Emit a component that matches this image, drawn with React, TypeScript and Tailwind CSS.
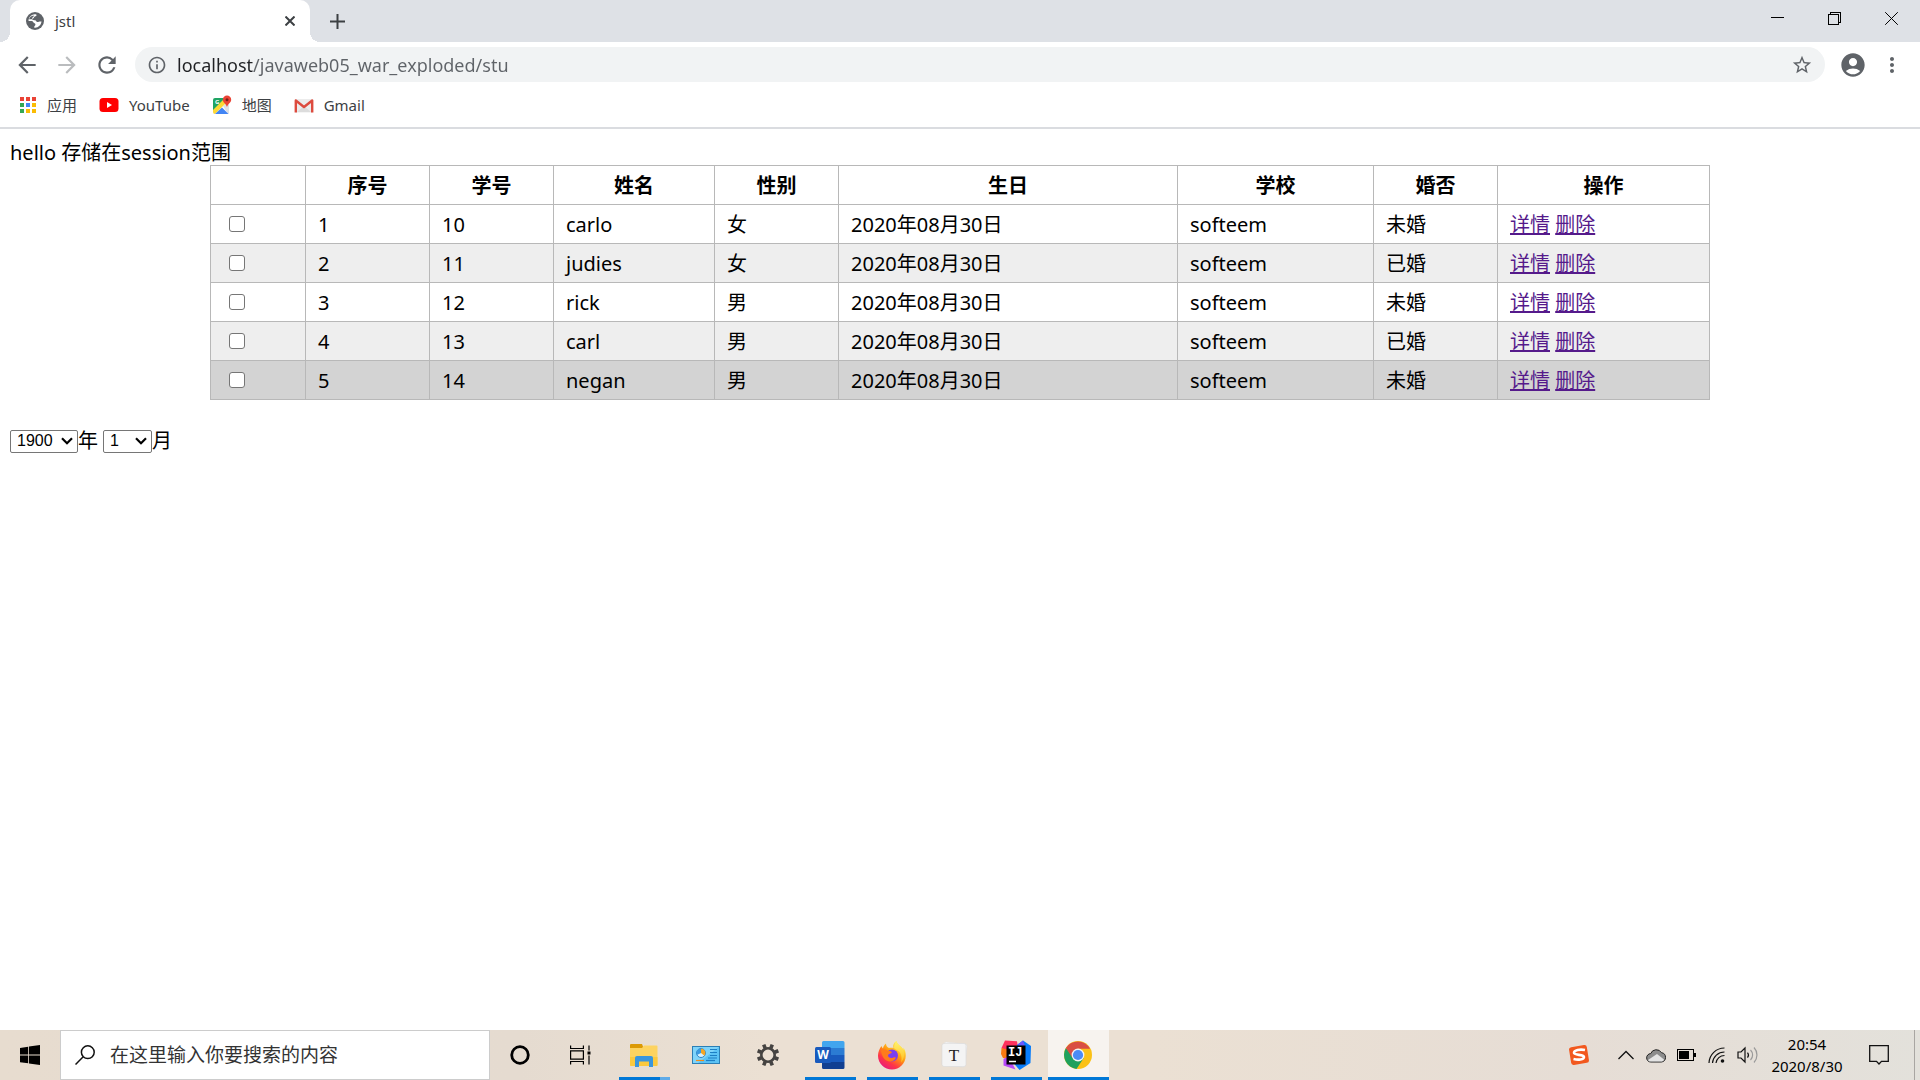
import type { ReactNode } from "react";
import {
  MdAccountCircle,
  MdArrowBack,
  MdArrowForward,
  MdInfoOutline,
  MdMoreVert,
  MdRefresh,
  MdStarBorder,
} from "react-icons/md";

type Student = {
  id: number;
  no: number;
  name: string;
  sex: string;
  birth: string;
  school: string;
  married: boolean;
};

const students: Student[] = [
  { id: 1, no: 10, name: "carlo", sex: "女", birth: "2020年08月30日", school: "softeem", married: false },
  { id: 2, no: 11, name: "judies", sex: "女", birth: "2020年08月30日", school: "softeem", married: true },
  { id: 3, no: 12, name: "rick", sex: "男", birth: "2020年08月30日", school: "softeem", married: false },
  { id: 4, no: 13, name: "carl", sex: "男", birth: "2020年08月30日", school: "softeem", married: true },
  { id: 5, no: 14, name: "negan", sex: "男", birth: "2020年08月30日", school: "softeem", married: false },
];

const columns = [
  { title: "", width: "w-[95px]" },
  { title: "序号", width: "w-[124px]" },
  { title: "学号", width: "w-[124px]" },
  { title: "姓名", width: "w-[161px]" },
  { title: "性别", width: "w-[124px]" },
  { title: "生日", width: "w-[339px]" },
  { title: "学校", width: "w-[196px]" },
  { title: "婚否", width: "w-[124px]" },
  { title: "操作", width: "w-[212px]" },
];

const rowColor = (i: number) => {
  if (i === students.length - 1) return "bg-[#d3d3d3]";
  return i % 2 ? "bg-[#eeeeee]" : "bg-white";
};

/* ---------- browser ---------- */

function GlobeIcon() {
  return (
    <svg viewBox="0 0 18 18" className="size-[18px] shrink-0">
      <circle cx="9" cy="9" r="9" fill="#5f6368" />
      <path d="M9.500 2.200c1.300.3 1.300 1.200.6 1.900-.8.6-2 .4-2.100 1.500-.1 1-1.700.8-1.700 1.900 0 1 1.900.4 3 .8 1 .4.900 1.700 2 1.800 1.200.1 2.200-.9 4.200-.5-.4 3.400-3 6-6.300 6.200-1 0-1.200-.5-.9-1.300.4-.9 1.300-1.300 1.100-2.300-.2-1.100-1.700-.8-2.100-1.900-.4-1-1.200-1.400-2.500-1.300-.9.100-1.600 0-2.400-.3.200-2.500 1.500-4.500 3.600-5.700 1.100-.6 2.200-.9 3.500-.8z" fill="#fff" />
      <path d="M3 7.400c1.200-.6 2 .2 2.900-.3.800-.5.200-1.400 1-2 .7-.5 1.200-.8.9-1.700-2.600.3-4.500 1.900-4.800 4z" fill="#5f6368" />
    </svg>
  );
}

function TabStrip() {
  return (
    <div className="flex h-[42px] items-stretch bg-[#dee1e6]">
      <div className="relative ml-[10px] flex w-[300px] items-center rounded-t-[10px] bg-white pl-4 pr-3">
        <span className="absolute bottom-0 -left-[10px] size-[10px] bg-[radial-gradient(circle_at_0_0,#dee1e6_10px,#fff_10px)]" />
        <span className="absolute bottom-0 -right-[10px] size-[10px] bg-[radial-gradient(circle_at_100%_0,#dee1e6_10px,#fff_10px)]" />
        <GlobeIcon />
        <span className="ml-[11px] flex-1 text-[15px] text-[#3c4043]">jstl</span>
        <button aria-label="关闭标签页" className="flex size-4 items-center justify-center">
          <svg viewBox="0 0 10 10" className="size-[10px]" stroke="#3c4043" strokeWidth="2">
            <path d="M.5.5l9 9M9.500.5l-9 9" />
          </svg>
        </button>
      </div>
      <button aria-label="新标签页" className="ml-5 flex items-center">
        <svg viewBox="0 0 15 15" className="size-[15px]" stroke="#3c4043" strokeWidth="2">
          <path d="M7.500 0v15M0 7.500h15" />
        </svg>
      </button>
      <div className="ml-auto flex h-9 [&>button]:flex [&>button]:w-[57px] [&>button]:items-center [&>button]:justify-center">
        <button aria-label="最小化">
          <svg viewBox="0 0 13 13" className="size-[13px]" stroke="#000" shapeRendering="crispEdges">
            <path d="M0 5.500h13" />
          </svg>
        </button>
        <button aria-label="向下还原">
          <svg viewBox="0 0 13 13" className="size-[13px]" fill="none" stroke="#000" shapeRendering="crispEdges">
            <path d="M.5 2.500h10v10H.5zM2.500 2.500V.5h10v10h-2" />
          </svg>
        </button>
        <button aria-label="关闭">
          <svg viewBox="0 0 13 13" className="size-[13px]" stroke="#000">
            <path d="M.2.2l12.600 12.600M12.800.2L.2 12.800" />
          </svg>
        </button>
      </div>
    </div>
  );
}

function Toolbar() {
  return (
    <div className="flex h-[45px] items-center pr-4 text-[#5f6368]">
      <div className="flex w-[135px] items-center gap-[14px] pl-[14px]">
        <button aria-label="返回"><MdArrowBack className="size-[26px]" /></button>
        <button aria-label="前进" className="text-[#babcbe]"><MdArrowForward className="size-[26px]" /></button>
        <button aria-label="重新加载"><MdRefresh className="size-[26px]" /></button>
      </div>
      <div className="flex h-[35px] flex-1 items-center rounded-full bg-[#f1f3f4] pl-3 pr-3">
        <MdInfoOutline className="size-5 shrink-0" />
        <input
          aria-label="地址"
          defaultValue="localhost/javaweb05_war_exploded/stu"
          className="ml-[10px] h-6 flex-1 bg-[linear-gradient(90deg,#202124_76px,#5f6368_76px)] bg-clip-text text-[18px] leading-6 text-transparent outline-none"
        />
        <button aria-label="收藏"><MdStarBorder className="size-[22px]" /></button>
      </div>
      <button aria-label="用户" className="ml-[14px]"><MdAccountCircle className="size-7" /></button>
      <button aria-label="菜单" className="ml-[13px]"><MdMoreVert className="size-6" /></button>
    </div>
  );
}

const appDots = ["#ea4335", "#ea4335", "#ea4335", "#34a853", "#4285f4", "#fbbc04", "#34a853", "#fbbc04", "#fbbc04"];

function Bookmark({ label, children }: { label: string; children: ReactNode }) {
  return (
    <a href="#" className="flex items-center gap-[10px]">
      {children}
      {label}
    </a>
  );
}

function BookmarkBar() {
  return (
    <div className="flex h-[42px] items-center gap-[22px] border-b-2 border-[#dadce0] pb-1 pl-[19px] text-[15px] text-[#3c4043]">
      <Bookmark label="应用">
        <svg viewBox="0 0 18 18" className="size-[18px]">
          {appDots.map((c, i) => (
            <rect key={i} x={1 + (i % 3) * 6} y={1 + Math.floor(i / 3) * 6} width="4" height="4" fill={c} />
          ))}
        </svg>
      </Bookmark>
      <Bookmark label="YouTube">
        <svg viewBox="0 0 20 14" className="h-[14px] w-5">
          <rect width="19" height="14" x=".5" rx="3.500" fill="#f00" />
          <path d="M8 4l5 3-5 3z" fill="#fff" />
        </svg>
      </Bookmark>
      <Bookmark label="地图">
        <svg viewBox="0 0 20 20" className="size-5">
          <path d="M1 5a2 2 0 0 1 2-2h12L1 17z" fill="#1fa463" />
          <path d="M11 11l5-4 1 3v7a2 2 0 0 1-1 2z" fill="#dfe1e5" />
          <path d="M1 15L13 3l3 3L3 19a2 2 0 0 1-2-2z" fill="#fdd835" />
          <path d="M3 19l7-6.500 6.500 6.500z" fill="#4285f4" />
          <path d="M15 .5a4.200 4.200 0 0 0-4.200 4.200c0 3 3.500 4 4.200 7.300.7-3.300 4.200-4.300 4.200-7.300A4.200 4.200 0 0 0 15 .5z" fill="#ea4335" />
          <circle cx="15" cy="4.700" r="1.500" fill="#7b1f18" />
          <text x="3" y="9" fontSize="6" fontWeight="700" fill="#fff">G</text>
        </svg>
      </Bookmark>
      <Bookmark label="Gmail">
        <svg viewBox="0 0 20 15" className="h-[15px] w-5">
          <rect x="1" y="1" width="18" height="13.500" rx="1" fill="#ececec" />
          <path d="M3 14l7-6 7 6z" fill="#dcdcdc" />
          <path d="M1.800 14.500V2.500L10 9l8.200-6.500v12" fill="none" stroke="#dd4b3e" strokeWidth="2.400" strokeLinejoin="round" />
        </svg>
      </Bookmark>
    </div>
  );
}

/* ---------- page ---------- */

function StudentTable() {
  return (
    <table className="mx-auto w-[1499px] max-w-full table-fixed border-collapse [&_td]:border [&_td]:border-[#b8b8b8] [&_td]:px-3 [&_td]:pt-[7px] [&_td]:pb-[5px] [&_th]:border [&_th]:border-[#b8b8b8] [&_th]:px-3 [&_th]:pt-[7px] [&_th]:pb-[5px]">
      <thead>
        <tr>
          {columns.map((c, i) => (
            <th key={i} className={`${c.width} font-bold`}>{c.title}</th>
          ))}
        </tr>
      </thead>
      <tbody>
        {students.map((s, i) => (
          <tr key={s.id} className={rowColor(i)}>
            <td>
              <input
                type="checkbox"
                aria-label={s.name}
                className="mb-[2px] ml-[6px] block size-4 appearance-none rounded-[3px] border border-[#767676] bg-white"
              />
            </td>
            <td>{s.id}</td>
            <td>{s.no}</td>
            <td>{s.name}</td>
            <td>{s.sex}</td>
            <td>{s.birth}</td>
            <td>{s.school}</td>
            <td>{s.married ? "已婚" : "未婚"}</td>
            <td>
              <a href="#" className="text-[#551a8b] underline">详情</a>{" "}
              <a href="#" className="text-[#551a8b] underline">删除</a>
            </td>
          </tr>
        ))}
      </tbody>
    </table>
  );
}

function Picker({ unit, width, options }: { unit: string; width: string; options: number[] }) {
  return (
    <label className="flex items-center">
      <span className="relative flex items-center">
        <select className={`${width} h-[23px] appearance-none rounded-[2px] border border-[#767676] bg-white pl-[6px] font-['Liberation_Sans',sans-serif] text-[16px] leading-5`}>
          {options.map(o => <option key={o}>{o}</option>)}
        </select>
        <svg viewBox="0 0 12 8" className="pointer-events-none absolute right-[5px] h-2 w-3" fill="none" stroke="#000" strokeWidth="2.200">
          <path d="M1 1.200l5 5 5-5" />
        </svg>
      </span>
      {unit}
    </label>
  );
}

const years = Array.from({ length: 121 }, (_, i) => 1900 + i);
const months = Array.from({ length: 12 }, (_, i) => i + 1);

/* ---------- taskbar ---------- */

function FolderIcon() {
  return (
    <svg viewBox="0 0 28 24" className="h-6 w-7">
      <path d="M0 2a1 1 0 0 1 1-1h11l1 2.500V6H0z" fill="#dc9a06" />
      <path d="M0 5h12l2-2.500h12.500a1 1 0 0 1 1 1V22a1 1 0 0 1-1 1H1a1 1 0 0 1-1-1z" fill="#fdd360" />
      <path d="M0 14h27.500v8a1 1 0 0 1-1 1H1a1 1 0 0 1-1-1z" fill="#fbc93e" />
      <path d="M5 24V15a2 2 0 0 1 2-2h14a2 2 0 0 1 2 2v9h-4v-5.500h-10V24z" fill="#3a96dd" />
    </svg>
  );
}

function PanelIcon() {
  return (
    <svg viewBox="0 0 28 18" className="h-[18px] w-7">
      <rect x=".5" y=".5" width="27" height="17" fill="#5cc3f5" stroke="#2c7fb5" />
      <path d="M1 1h26L6 17H1z" fill="#7fd4fa" />
      <circle cx="9" cy="7" r="4.500" fill="#d6f1ff" stroke="#2c84c4" />
      <path d="M9 7V2.500A4.500 4.500 0 0 0 5 9z" fill="#3a9be0" />
      <path d="M9 7V2.500A4.500 4.500 0 0 1 12.500 9.800z" fill="#f5a623" />
      <path d="M18 3.500h7M18 6.500h7M18 9.500h7M16 12h9" stroke="#1d7fc4" strokeWidth="1.200" />
      <path d="M4 14.500h8" stroke="#f08c1a" strokeWidth="1.200" />
      <path d="M14 14.500h9" stroke="#1d7fc4" strokeWidth="1.200" />
    </svg>
  );
}

function GearIcon() {
  return (
    <svg viewBox="0 0 24 24" className="size-6" stroke="#454341" fill="none">
      <circle cx="12" cy="12" r="6.700" strokeWidth="2.600" />
      {[22.5, 67.5, 112.5, 157.5].map(a => (
        <path key={a} d="M12 .8v4M12 19.200v4" strokeWidth="3.600" transform={`rotate(${a} 12 12)`} />
      ))}
    </svg>
  );
}

function WordIcon() {
  return (
    <svg viewBox="0 0 30 28" className="h-7 w-[30px]">
      <path d="M7 1.500A1.500 1.500 0 0 1 8.500 0H28a1.500 1.500 0 0 1 1.500 1.500V7H7z" fill="#41a5ee" />
      <path d="M7 7h22.500v7H7z" fill="#2b7cd3" />
      <path d="M7 14h22.500v7H7z" fill="#185abd" />
      <path d="M7 21h22.500v5.500A1.500 1.500 0 0 1 28 28H8.500A1.500 1.500 0 0 1 7 26.500z" fill="#103f91" />
      <rect y="6" width="16" height="16" rx="1.500" fill="#185abd" />
      <text x="8" y="18" textAnchor="middle" fontSize="12" fontWeight="700" fontFamily="Open Sans, sans-serif" fill="#fff">W</text>
    </svg>
  );
}

function FirefoxIcon() {
  return (
    <svg viewBox="0 0 28 29" className="h-[29px] w-7">
      <defs>
        <linearGradient id="fx" x1=".8" y1=".1" x2=".2" y2="1">
          <stop offset="0" stopColor="#fff44f" />
          <stop offset=".4" stopColor="#ff980e" />
          <stop offset=".7" stopColor="#ff3647" />
          <stop offset="1" stopColor="#e31587" />
        </linearGradient>
        <linearGradient id="fxTail" x1="0" y1="0" x2="0" y2="1">
          <stop offset="0" stopColor="#fff36e" />
          <stop offset="1" stopColor="#ffbd1f" />
        </linearGradient>
      </defs>
      <path d="M3.500 5C3.800 6.200 4.500 7 5 7.500 5.200 5.500 6.500 3.500 8 2.500c0 2 1 3.500 3 4.500 2-.5 3.500-.2 4.500 0C14.500 4 16 1.500 18.500 0c.5 3.500 4 4.500 6 7.500.5.500.8 1 1 1.500V6.500c1.500 2.500 2.500 5.500 2.300 8.500C27.500 22.500 21.500 28.500 14 28.500S0 22.500 0 14.800C0 11 1.500 7.500 3.500 5z" fill="url(#fx)" />
      <path d="M16 7c0-3 1-5.500 2.500-7 .5 3.500 4 4.500 6 7.500 3 5 1.500 11-1.500 14 1.500-5 0-9-2-11C19.500 9 17 8.500 16 7z" fill="url(#fxTail)" />
      <circle cx="14" cy="14.500" r="6" fill="#7a3ff2" />
      <path d="M3 10c2-2 5-2 7 .2 1.500-.4 3 .1 4 1.100-1 1.700-3.500 1.200-4 3-.3 2 2.500 3.500 5 2.500 1.500-.7 2.500-.5 3 0-1.500 3.500-6 4.700-9.500 2.700C5 17.500 4 14 3 10z" fill="#ff7b1c" />
    </svg>
  );
}

function TyporaIcon() {
  return (
    <svg viewBox="0 0 28 28" className="size-7">
      <rect x="3" y="2" width="23" height="23" rx="2" fill="#fafafa" stroke="#ddd" strokeWidth=".6" transform="rotate(6 14 14)" />
      <rect x="2" y="2.500" width="24" height="23" rx="2" fill="#f4f4f4" stroke="#d8d8d8" strokeWidth=".6" />
      <text x="14" y="20" textAnchor="middle" fontSize="17" fontFamily="Liberation Serif, serif" fill="#222">T</text>
    </svg>
  );
}

function IdeaIcon() {
  return (
    <svg viewBox="0 0 30 30" className="size-[30px]">
      <path d="M4 .5l12 .8L17 8 8 14 .500 8z" fill="#fe315d" />
      <path d="M.5 8L8 10l-1 9-5-1-2-4z" fill="#f97a12" />
      <path d="M2.500 19l5-3 7 13.500-12-4z" fill="#b74af7" />
      <path d="M16 5l6-4.500L30 6l-.5 17-11 7-6-7z" fill="#087cfa" />
      <path d="M16 5l6-4.500 2 5.500z" fill="#6b57ff" />
      <rect x="5.500" y="5.500" width="19" height="19" fill="#000" />
      <text x="7" y="16" fontSize="12" fontWeight="700" fontFamily="Liberation Mono, monospace" fill="#fff">IJ</text>
      <path d="M8 21.500h7" stroke="#fff" strokeWidth="1.500" />
    </svg>
  );
}

function ChromeIcon() {
  return (
    <svg viewBox="0 0 28 28" className="size-7">
      <circle cx="14" cy="14" r="14" fill="#fbc116" />
      <path d="M14 14h-6L1.900 7A14 14 0 0 0 12.500 27.900L19.600 17.200z" fill="#1fa15d" />
      <path d="M1.900 7A14 14 0 0 1 26.100 7.800H14L8.300 16.700z" fill="#d94f43" />
      <circle cx="14" cy="14" r="6.400" fill="#f3f3f3" />
      <circle cx="14" cy="14" r="5.100" fill="#4b8bf4" />
    </svg>
  );
}

const tasks: { name: string; icon: ReactNode; open?: boolean; grouped?: boolean; active?: boolean }[] = [
  { name: "文件资源管理器", icon: <FolderIcon />, open: true, grouped: true },
  { name: "控制面板", icon: <PanelIcon /> },
  { name: "设置", icon: <GearIcon /> },
  { name: "Word", icon: <WordIcon />, open: true },
  { name: "Firefox", icon: <FirefoxIcon />, open: true },
  { name: "Typora", icon: <TyporaIcon />, open: true },
  { name: "IntelliJ IDEA", icon: <IdeaIcon />, open: true },
  { name: "Chrome", icon: <ChromeIcon />, open: true, active: true },
];

function Tray() {
  return (
    <div className="ml-auto flex items-stretch">
      <div className="mr-px flex items-center">
        <svg viewBox="0 0 20 20" className="mr-7 size-5">
          <rect x="1" y="1" width="18" height="18" rx="2.500" fill="#f2581e" transform="rotate(-9 10 10)" />
          <path d="M16 5C11 4 5 5 5 7.800c0 2.700 10 1.500 10 4.300 0 2.700-6 3-10.500 2" fill="none" stroke="#fff" strokeWidth="2.600" />
        </svg>
        <svg viewBox="0 0 18 10" className="mr-[11px] h-[10px] w-[18px]" fill="none" stroke="#111" strokeWidth="1.300">
          <path d="M1.500 9L9 1.500 16.500 9" />
        </svg>
        <svg viewBox="0 0 20 15" className="mr-[11px] h-[15px] w-5">
          <path d="M5 14a4.200 4.200 0 0 1-.3-8.400A6 6 0 0 1 15.500 4.700 4.700 4.700 0 0 1 15.500 14z" fill="#8c8c8c" stroke="#222" />
          <path d="M2 12l9-6 7 5.500c-.5 1.500-1.500 2-2.500 2H5c-1.500 0-2.500-.5-3-1.500z" fill="#e4e4e4" />
        </svg>
        <svg viewBox="0 0 19 12" className="mr-3 h-3 w-[19px]" shapeRendering="crispEdges">
          <path d="M.5.5h16v10.500H.5z" fill="none" stroke="#000" />
          <path d="M2 2h10v7.500H2zM17 4h2v4h-2z" />
        </svg>
        <svg viewBox="0 0 18 18" className="mr-[11px] size-[18px]" fill="none" stroke="#111" strokeWidth="1.200">
          <path d="M1 17A15.500 15.500 0 0 1 16.500 2" />
          <path d="M4.500 17A12 12 0 0 1 16.500 6" />
          <path d="M8 17a8.500 8.500 0 0 1 8.500-7.500" />
          <circle cx="14.500" cy="15" r="1.800" fill="#111" stroke="none" />
        </svg>
        <svg viewBox="0 0 22 18" className="h-[18px] w-[22px]" fill="none" stroke="#111" strokeWidth="1.200">
          <path d="M1 6h3l4-4v14l-4-4H1z" />
          <path d="M10.500 6.500a4 4 0 0 1 0 5" />
          <path d="M13.500 4a7 7 0 0 1 0 10M17 1.500a11 11 0 0 1 0 15" stroke="#999" />
        </svg>
      </div>
      <div className="flex w-[94px] flex-col justify-center text-center text-[15px] leading-[22px] text-black">
        <span>20:54</span>
        <span>2020/8/30</span>
      </div>
      <button aria-label="通知" className="flex w-[61px] items-center justify-center border-r border-[#a9a6a2] pr-[10px]">
        <svg viewBox="0 0 20 20" className="size-5" fill="none" stroke="#111" strokeWidth="1.300">
          <path d="M.7.700h18.600v15.600h-6.800L10 19l-2.500-2.700H.7z" />
        </svg>
      </button>
      <div className="w-[5px]" />
    </div>
  );
}

function Taskbar() {
  return (
    <footer className="flex h-[50px] bg-[linear-gradient(90deg,#e7dccf,#e5dbd0_27%,#ebe0d3_40%,#ebe0d3_60%,#e6ddd5_82%,#e3e1db)]">
      <button aria-label="开始" className="flex w-[60px] items-center justify-center">
        <svg viewBox="0 0 20 20" className="size-5">
          <path d="M0 2.900l8.200-1.200v7.800H0zM9 1.600L20 0v9.500H9zM0 10.400h8.200v7.900L0 17.200zM9 10.400h11V20L9 18.400z" />
        </svg>
      </button>
      <label className="flex w-[430px] items-center border border-[#cccccc] bg-white pl-[14px]">
        <svg viewBox="0 0 20 20" className="size-5" fill="none" stroke="#111" strokeWidth="1.500">
          <circle cx="12.800" cy="7.200" r="6.400" />
          <path d="M8.200 11.800L.5 19.500" />
        </svg>
        <input
          aria-label="搜索"
          placeholder="在这里输入你要搜索的内容"
          className="ml-[15px] flex-1 bg-transparent text-[19px] outline-none placeholder:text-[#333333]"
        />
      </label>
      <button aria-label="Cortana" className="flex w-[60px] items-center justify-center">
        <svg viewBox="0 0 20 20" className="size-5" fill="none" stroke="#000" strokeWidth="2.800">
          <circle cx="10" cy="10" r="8.300" />
        </svg>
      </button>
      <button aria-label="任务视图" className="flex w-[60px] items-center justify-center">
        <svg viewBox="0 0 21 20" className="h-5 w-[21px]" fill="none" stroke="#000" strokeWidth="1.200">
          <path d="M.6.500v3h12.800v-3M.6 19.500v-3h12.800v3M.6 5.800h12.800v8.400H.6zM19 .5v5M19 10.500v9" />
          <path d="M17.500 6.500h3v3h-3z" fill="#000" stroke="none" />
        </svg>
      </button>
      <nav className="ml-1 flex gap-px">
        {tasks.map(t => (
          <button
            key={t.name}
            aria-label={t.name}
            className={`relative flex w-[61px] items-center justify-center pr-[2px] ${t.active ? "bg-[#f7f3ef]" : ""}`}
          >
            {t.icon}
            {t.open && (
              <span
                className={`absolute bottom-0 h-[3px] bg-[#0078d7] ${t.active ? "inset-x-0" : "inset-x-[5px]"} ${t.grouped ? "border-r-10 border-[#5fabe8]" : ""}`}
              />
            )}
          </button>
        ))}
      </nav>
      <Tray />
    </footer>
  );
}

export default function App() {
  return (
    <div className="flex min-h-screen flex-col bg-white font-['Noto_Sans','Noto_Sans_CJK_SC',sans-serif]">
      <header>
        <TabStrip />
        <Toolbar />
        <BookmarkBar />
      </header>
      <main className="flex-1 pt-[11px] text-[20px] leading-[26px] text-black">
        <p className="px-[10px] leading-[25px]">hello 存储在session范围</p>
        <StudentTable />
        <div className="mt-7 flex gap-[5px] px-[10px]">
          <Picker unit="年" width="w-[68px]" options={years} />
          <Picker unit="月" width="w-[49px]" options={months} />
        </div>
      </main>
      <Taskbar />
    </div>
  );
}
